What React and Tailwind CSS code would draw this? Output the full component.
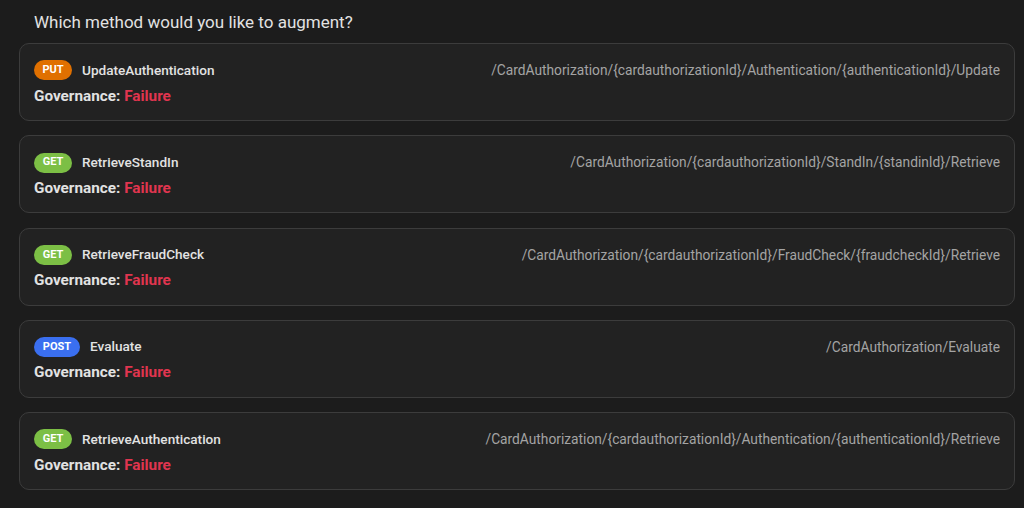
const methods = [
  {
    verb: 'PUT',
    name: 'UpdateAuthentication',
    path: '/CardAuthorization/{cardauthorizationId}/Authentication/{authenticationId}/Update',
  },
  {
    verb: 'GET',
    name: 'RetrieveStandIn',
    path: '/CardAuthorization/{cardauthorizationId}/StandIn/{standinId}/Retrieve',
  },
  {
    verb: 'GET',
    name: 'RetrieveFraudCheck',
    path: '/CardAuthorization/{cardauthorizationId}/FraudCheck/{fraudcheckId}/Retrieve',
  },
  {
    verb: 'POST',
    name: 'Evaluate',
    path: '/CardAuthorization/Evaluate',
  },
  {
    verb: 'GET',
    name: 'RetrieveAuthentication',
    path: '/CardAuthorization/{cardauthorizationId}/Authentication/{authenticationId}/Retrieve',
  },
];

const verbStyles = {
  PUT: 'bg-[#e07000] w-[38px]',
  GET: 'bg-[#7cbf45] w-[38px]',
  POST: 'bg-[#3a6ff0] w-[46px]',
};

function VerbBadge({ verb }) {
  return (
    <span
      className={`inline-flex h-5 shrink-0 items-center justify-center rounded-full text-[11px] font-bold text-white ${verbStyles[verb]}`}
    >
      {verb}
    </span>
  );
}

function MethodCard({ method }) {
  return (
    <div className="flex h-[78px] flex-col gap-[4px] rounded-[10px] border border-[#3c3c3c] bg-[#222222] px-[14px] pt-4">
      <div className="flex items-center">
        <VerbBadge verb={method.verb} />
        <span className="ml-[10px] -mt-px text-[13.6px] font-medium text-[#e2e2e2]">
          {method.name}
        </span>
        <span className="ml-auto text-[13.75px] text-[#a4a4a4]">
          {method.path}
        </span>
      </div>
      <p className="text-[15.3px] font-bold text-[#e2e2e2]">
        Governance: <span className="text-[#e0354f]">Failure</span>
      </p>
    </div>
  );
}

export default function App() {
  return (
    <div
      className="h-screen overflow-hidden bg-[#1c1c1c] pl-[19px] pr-[9px]"
      style={{ fontFamily: 'Roboto, "Liberation Sans", sans-serif' }}
    >
      <h2 className="px-[15px] pt-[11px] pb-[10px] text-[17px] leading-[22px] text-[#e2e2e2]">
        Which method would you like to augment?
      </h2>
      <div className="flex flex-col gap-[14.25px]">
        {methods.map((m) => (
          <MethodCard key={m.name} method={m} />
        ))}
      </div>
    </div>
  );
}
